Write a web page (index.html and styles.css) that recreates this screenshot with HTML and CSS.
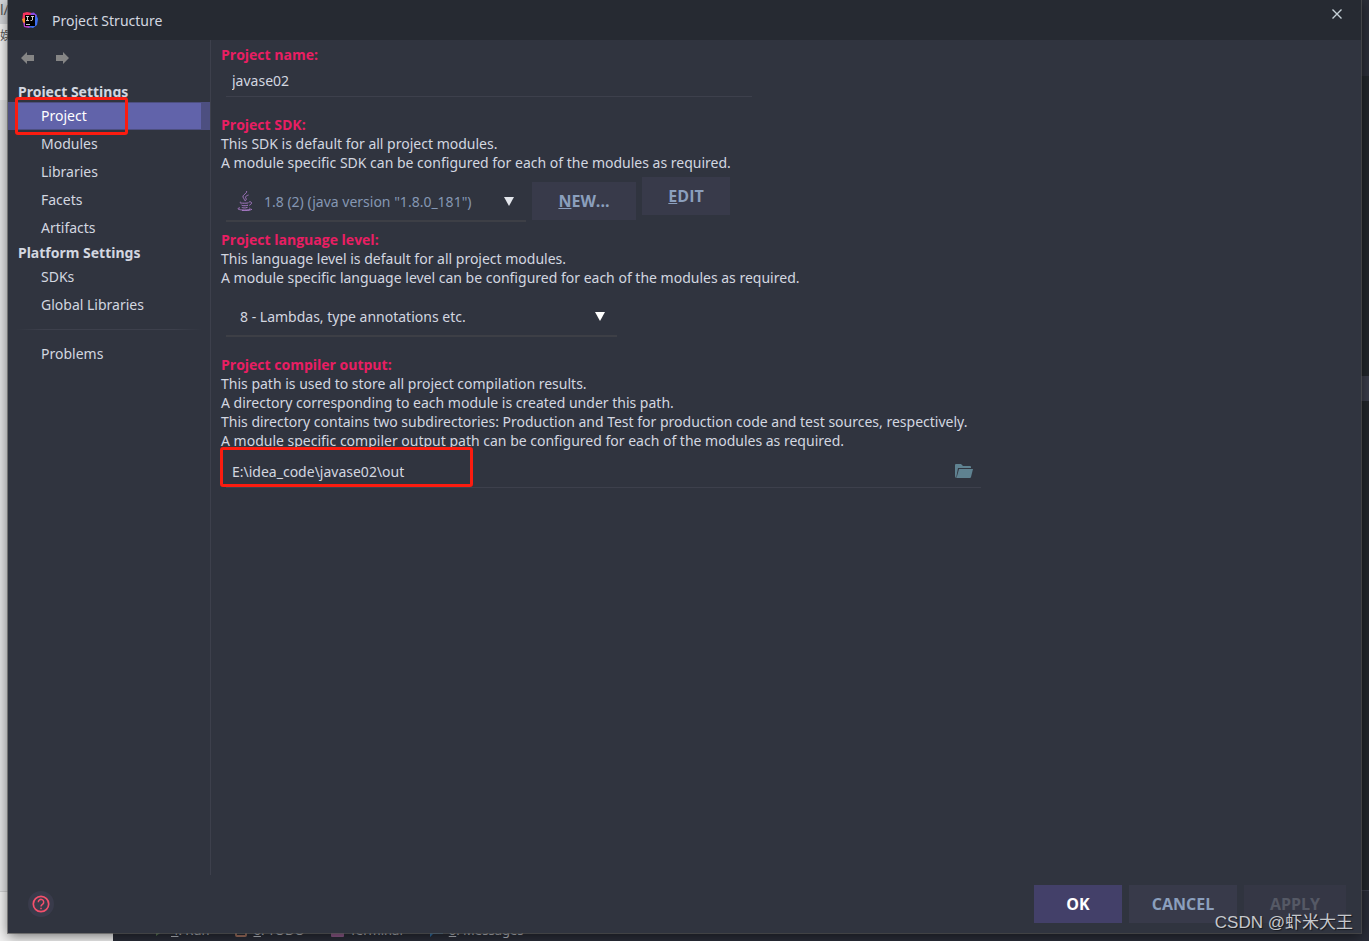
FILE: index.html
```html
<!doctype html>

<html lang="en">
    <head>
        <meta charset="utf-8">
        <title>Project Structure</title>
        <link rel="stylesheet" href="styles.css">
    </head>
    <body>
        <!-- The windows that are behind the dialog -->
        <div class="desktop">
            <div class="browser">
                <div class="browser-tab">l/</div>
                <div class="browser-bookmarks">娱</div>
                <div class="browser-page"></div>
                <div class="browser-bottom"></div>
            </div>
            <div class="ide">
                <div class="ide-top"></div>
                <div class="ide-editor"><div class="ide-thumb"></div></div>
                <div class="ide-tools">
                    <span class="tool"><svg width="12" height="12" viewBox="0 0 12 12"><path d="M3 1l7 5-7 5z" fill="#5b7a55"/></svg><span><u>4</u>: Run</span></span>
                    <span class="tool"><svg width="12" height="12" viewBox="0 0 12 12"><rect x="1" y="1" width="10" height="10" rx="1" fill="none" stroke="#a0705f" stroke-width="2"/></svg><span><u>6</u>: TODO</span></span>
                    <span class="tool"><svg width="13" height="12" viewBox="0 0 13 12"><rect width="13" height="12" rx="1" fill="#8e5a8a"/></svg><span>Terminal</span></span>
                    <span class="tool"><svg width="14" height="12" viewBox="0 0 14 12"><path d="M1 0h13v9H4l-3 3z" fill="#2f6fa5"/></svg><span><u>0</u>: Messages</span></span>
                </div>
            </div>
        </div>

        <div class="dialog">
            <header class="titlebar">
                <svg class="logo" width="16" height="16" viewBox="0 0 16 16">
                    <path d="M1 1l4-1 5 1-3 6-6 2-.5-3z" fill="#f5325c"/>
                    <path d="M1 9l4-2 4 8-2 1-5-1z" fill="#b43cc8"/>
                    <path d="M0 7l3-1 1 5-3-.5z" fill="#f98b2b"/>
                    <path d="M10 3l4-1 2 5-1 6-4 3-4-1z" fill="#3c6df0"/>
                    <path d="M9 1l3-.5 3 3-3 2-4-2z" fill="#8a4be0"/>
                    <rect x="3" y="3" width="10" height="11" fill="#000"/>
                    <path d="M4 4.500h3M5.500 4.500v4M4 8.500h3M9 4.500h3M10.500 4.500v3.500q0 .7-2 .5M4 12.500h4" fill="none" stroke="#ddd" stroke-width=".9"/>
                </svg>
                <h1>Project Structure</h1>
                <button class="close" aria-label="Close">
                    <svg width="10" height="10" viewBox="0 0 10 10"><path d="M.5.500l9 9M9.500.500l-9 9" stroke="#c5d0d6" stroke-width="1.400"/></svg>
                </button>
            </header>

            <div class="content">
                <nav class="sidebar">
                    <div class="history">
                        <button aria-label="Back"><svg width="14" height="12" viewBox="0 0 14 12"><path d="M0 6l6-6v3h7v6H6v3z" fill="#858585"/></svg></button>
                        <button aria-label="Forward"><svg width="14" height="12" viewBox="0 0 14 12"><path d="M14 6L8 0v3H1v6h7v3z" fill="#858585"/></svg></button>
                    </div>
                    <h2>Project Settings</h2>
                    <ul>
                        <li class="selected"><a href="#project">Project</a><span class="mark mark-item"></span></li>
                        <li><a href="#modules">Modules</a></li>
                        <li><a href="#libraries">Libraries</a></li>
                        <li><a href="#facets">Facets</a></li>
                        <li><a href="#artifacts">Artifacts</a></li>
                    </ul>
                    <h2>Platform Settings</h2>
                    <ul>
                        <li><a href="#sdks">SDKs</a></li>
                        <li><a href="#global">Global Libraries</a></li>
                    </ul>
                    <hr>
                    <ul>
                        <li><a href="#problems">Problems</a></li>
                    </ul>
                </nav>

                <main class="settings">
                    <section class="group">
                        <label class="caption" for="name">Project name:</label>
                        <div class="field field-name"><input type="text" id="name" value="javase02"></div>
                    </section>

                    <section class="group group-sdk">
                        <label class="caption" for="sdk">Project SDK:</label>
                        <p>This SDK is default for all project modules.<br>
                        A module specific SDK can be configured for each of the modules as required.</p>
                        <div class="row">
                            <div class="combo combo-sdk">
                                <svg class="java" width="16" height="20" viewBox="0 0 16 20" fill="none" stroke="#a678c4">
                                    <path d="M9.500 0c1 2.500-4 3.500-3.500 6 .2 1 1.500 2 1.500 3.500M11.500 4C8.500 5 8 6 9 7.500c.6 1-.2 2-1 2.500"/>
                                    <path d="M3.500 11c-1.500.8 0 1.200 4 1.200 2 0 3.500-.2 4-.5M12 11c3-1 3.500 2 .3 3.300M4.500 13.800c-.5 1 4.500 1.300 6.500.4M5 16c-.5 1 3.500 1.300 5.500.4"/>
                                    <path d="M3 16.800c-4 .8-2 2.200 4.500 2.200 5 0 7-.8 5-2M5 19.500c4 .4 8 0 10-1.300"/>
                                </svg>
                                <select id="sdk"><option>1.8 (2) (java version "1.8.0_181")</option></select>
                                <svg class="arrow" width="10" height="9" viewBox="0 0 10 9"><path d="M0 0h10L5 9z" fill="#e3e6ec"/></svg>
                            </div>
                            <button class="btn btn-new"><u>N</u>EW...</button>
                            <button class="btn btn-edit"><u>E</u>DIT</button>
                        </div>
                    </section>

                    <section class="group">
                        <label class="caption" for="level">Project language level:</label>
                        <p>This language level is default for all project modules.<br>
                        A module specific language level can be configured for each of the modules as required.</p>
                        <div class="row">
                            <div class="combo combo-level">
                                <select id="level"><option>8 - Lambdas, type annotations etc.</option></select>
                                <svg class="arrow" width="10" height="9" viewBox="0 0 10 9"><path d="M0 0h10L5 9z" fill="#fff"/></svg>
                            </div>
                        </div>
                    </section>

                    <section class="group group-output">
                        <label class="caption" for="output">Project compiler output:</label>
                        <p>This path is used to store all project compilation results.<br>
                        A directory corresponding to each module is created under this path.<br>
                        This directory contains two subdirectories: Production and Test for production code and test sources, respectively.<br>
                        A module specific compiler output path can be configured for each of the modules as required.</p>
                        <div class="field field-output">
                            <input type="text" id="output" value="E:\idea_code\javase02\out">
                            <button aria-label="Browse">
                                <svg width="18" height="14" viewBox="0 0 18 14"><path d="M0 1q0-1 1-1h5l2 2h7q1 0 1 1v1H3L1.500 12V14Q0 14 0 12z" fill="#5f8291"/><path d="M4 5h14l-2 8q-.3 1-1 1H1.500z" fill="#5f8291"/></svg>
                            </button>
                            <span class="mark mark-output"></span>
                        </div>
                    </section>
                </main>
            </div>

            <footer class="actions">
                <button class="help" aria-label="Help">
                    <svg width="18" height="18" viewBox="0 0 18 18" fill="none" stroke="#f4506c"><circle cx="9" cy="9" r="7.700" stroke-width="1.700"/><path d="M6.300 7.200a2.700 2.700 0 1 1 4.400 2C9.600 10 9 10.300 9 11.500M9 12.700v1.600" stroke-width="1.500"/></svg>
                </button>
                <button class="btn btn-ok">OK</button>
                <button class="btn btn-cancel">CANCEL</button>
                <button class="btn btn-apply" disabled>APPLY</button>
            </footer>
        </div>

        <div class="watermark">CSDN @虾米大王</div>
    </body>
</html>
```

FILE: styles.css
```css
* { box-sizing: border-box; }
body {
    margin: 0;
    display: grid;
    grid-template: minmax(0, 1fr) / minmax(0, 1fr);
    height: 100vh;
    position: relative;
    overflow: hidden;
    font: 14px/19px "Noto Sans", "Noto Sans CJK SC", sans-serif;
    color: #d3d7e0;
}
button, input, select {
    font: inherit;
    color: inherit;
    margin: 0;
    padding: 0;
    border: 0;
    background: none;
}
svg { display: block; flex: none; }
a { color: inherit; text-decoration: none; }
h1, h2, p, ul { margin: 0; padding: 0; }

/* windows behind */
.desktop {
    grid-area: 1 / 1;
    display: flex;
    overflow: hidden;
}
.browser {
    width: 113px;
    display: flex;
    flex-direction: column;
    background: #e2e3e4;
    color: #555;
}
.browser-tab { height: 24px; background: #d3d5d8; }
.browser-bookmarks {
    height: 76px;
    padding-top: 2px;
    background: #f1f1f1;
    font-size: 12px;
}
.browser-page { flex: 1; border-bottom: 1px solid #cfd0d1; }
.browser-bottom { height: 49px; background: #f0f0f0; }
.ide {
    flex: 1;
    display: flex;
    flex-direction: column;
    background: #22262b;
}
.ide-top { height: 76px; background: #2b2e38; }
.ide-editor { flex: 1; padding-top: 300px; }
.ide-thumb { height: 25px; background: #393c49; }
.ide-tools {
    display: flex;
    gap: 26px;
    height: 51px;
    padding: 30px 0 0 40px;
    border-top: 1px solid #393c49;
    background: #292c37;
    color: #b4b8c0;
    font-size: 13px;
}
.tool { display: flex; gap: 6px; }
.tool svg { margin-top: 4px; }

/* dialog */
.dialog {
    grid-area: 1 / 1;
    display: flex;
    flex-direction: column;
    margin: 0 8px 8px;
    background: #30343f;
    box-shadow: 0 0 0 1px #555a, 0 3px 12px #0008;
    z-index: 1;
}
.titlebar {
    display: flex;
    align-items: center;
    gap: 14px;
    height: 40px;
    padding: 0 19px 0 14px;
    background: #262a32;
}
.titlebar h1 {
    flex: 1;
    font-size: 14px;
    font-weight: 400;
}
.close { padding-bottom: 12px; }
.content {
    flex: 1;
    display: flex;
    min-height: 0;
}

.sidebar {
    width: 203px;
    border-right: 1px solid #3d404c;
}
.history {
    display: flex;
    align-items: flex-start;
    gap: 20px;
    height: 41px;
    padding: 12px 13px;
}
.sidebar h2 {
    padding-left: 10px;
    font-size: 14px;
    line-height: 21px;
}
.sidebar ul { list-style: none; }
.sidebar li {
    position: relative;
    padding: 1px 9px 1px 10px;
}
.sidebar li a {
    display: block;
    padding-left: 23px;
    line-height: 26px;
}
.sidebar .selected {
    background: #4d4f80;
    color: #fff;
}
.selected a { background: #6163aa; }
.sidebar hr {
    height: 1px;
    margin: 10px 8px;
    border: 0;
    background: linear-gradient(90deg, #30343f, #3d404c 15%, #3d404c 85%, #30343f);
}

/* red frames */
.mark {
    position: absolute;
    border: 3px solid #fb1c10;
    border-radius: 3px;
    pointer-events: none;
}
.mark-item { left: 7px; top: -5px; width: 113px; height: 38px; }
.mark-output { left: -6px; top: -8px; width: 253px; height: 40px; }

.settings {
    display: flex;
    flex-direction: column;
    align-items: flex-start;
    gap: 18px;
    padding: 5px 10px;
}
.group-sdk { margin-bottom: -10px; }
.caption {
    display: block;
    color: #e91e63;
    font-family: "Open Sans", sans-serif;
    font-weight: 700;
}
.field {
    position: relative;
    display: flex;
    align-items: center;
    height: 33px;
    margin-left: 5px;
    padding: 0 8px 0 6px;
    border-bottom: 1px solid #3d404c;
}
.field input {
    flex: 1;
    outline: 0;
}
.field-name { width: 526px; }
.field-output { width: 755px; margin-top: 5px; }
.row {
    display: flex;
    align-items: flex-start;
    gap: 6px;
    padding: 10px 0 0 5px;
}
.combo {
    display: flex;
    align-items: center;
    height: 40px;
    border-bottom: 2px solid #3d3f46;
}
.combo select {
    flex: 1;
    appearance: none;
    outline: 0;
}
.combo-sdk {
    width: 300px;
    gap: 11px;
    padding: 0 12px 0 11px;
    color: #8597b3;
}
.combo-level {
    width: 391px;
    padding: 0 12px 0 14px;
}
.btn {
    height: 38px;
    background: #383a4a;
    color: #8b9fbd;
    font: 700 16px/20px "Open Sans", sans-serif;
}
.btn-new { width: 104px; }
.btn-edit { width: 88px; margin-top: -5px; }

.actions {
    display: flex;
    align-items: center;
    gap: 7px;
    height: 58px;
    padding: 0 15px 0 20px;
}
.help {
    display: grid;
    place-items: center;
    width: 26px;
    height: 26px;
    margin-right: auto;
    border-radius: 50%;
    background: #393b4b;
}
.btn-ok { width: 88px; background: #434069; color: #fff; }
.btn-cancel { width: 108px; }
.btn-apply { width: 102px; background: #353745; color: #555965; }

.watermark {
    position: absolute;
    right: 16px;
    bottom: 6px;
    z-index: 2;
    color: #c6c8cc;
    font: 17px/24px "Liberation Sans", "Noto Sans CJK SC", sans-serif;
    text-shadow: 1px 1px 1px #0008;
}
```
